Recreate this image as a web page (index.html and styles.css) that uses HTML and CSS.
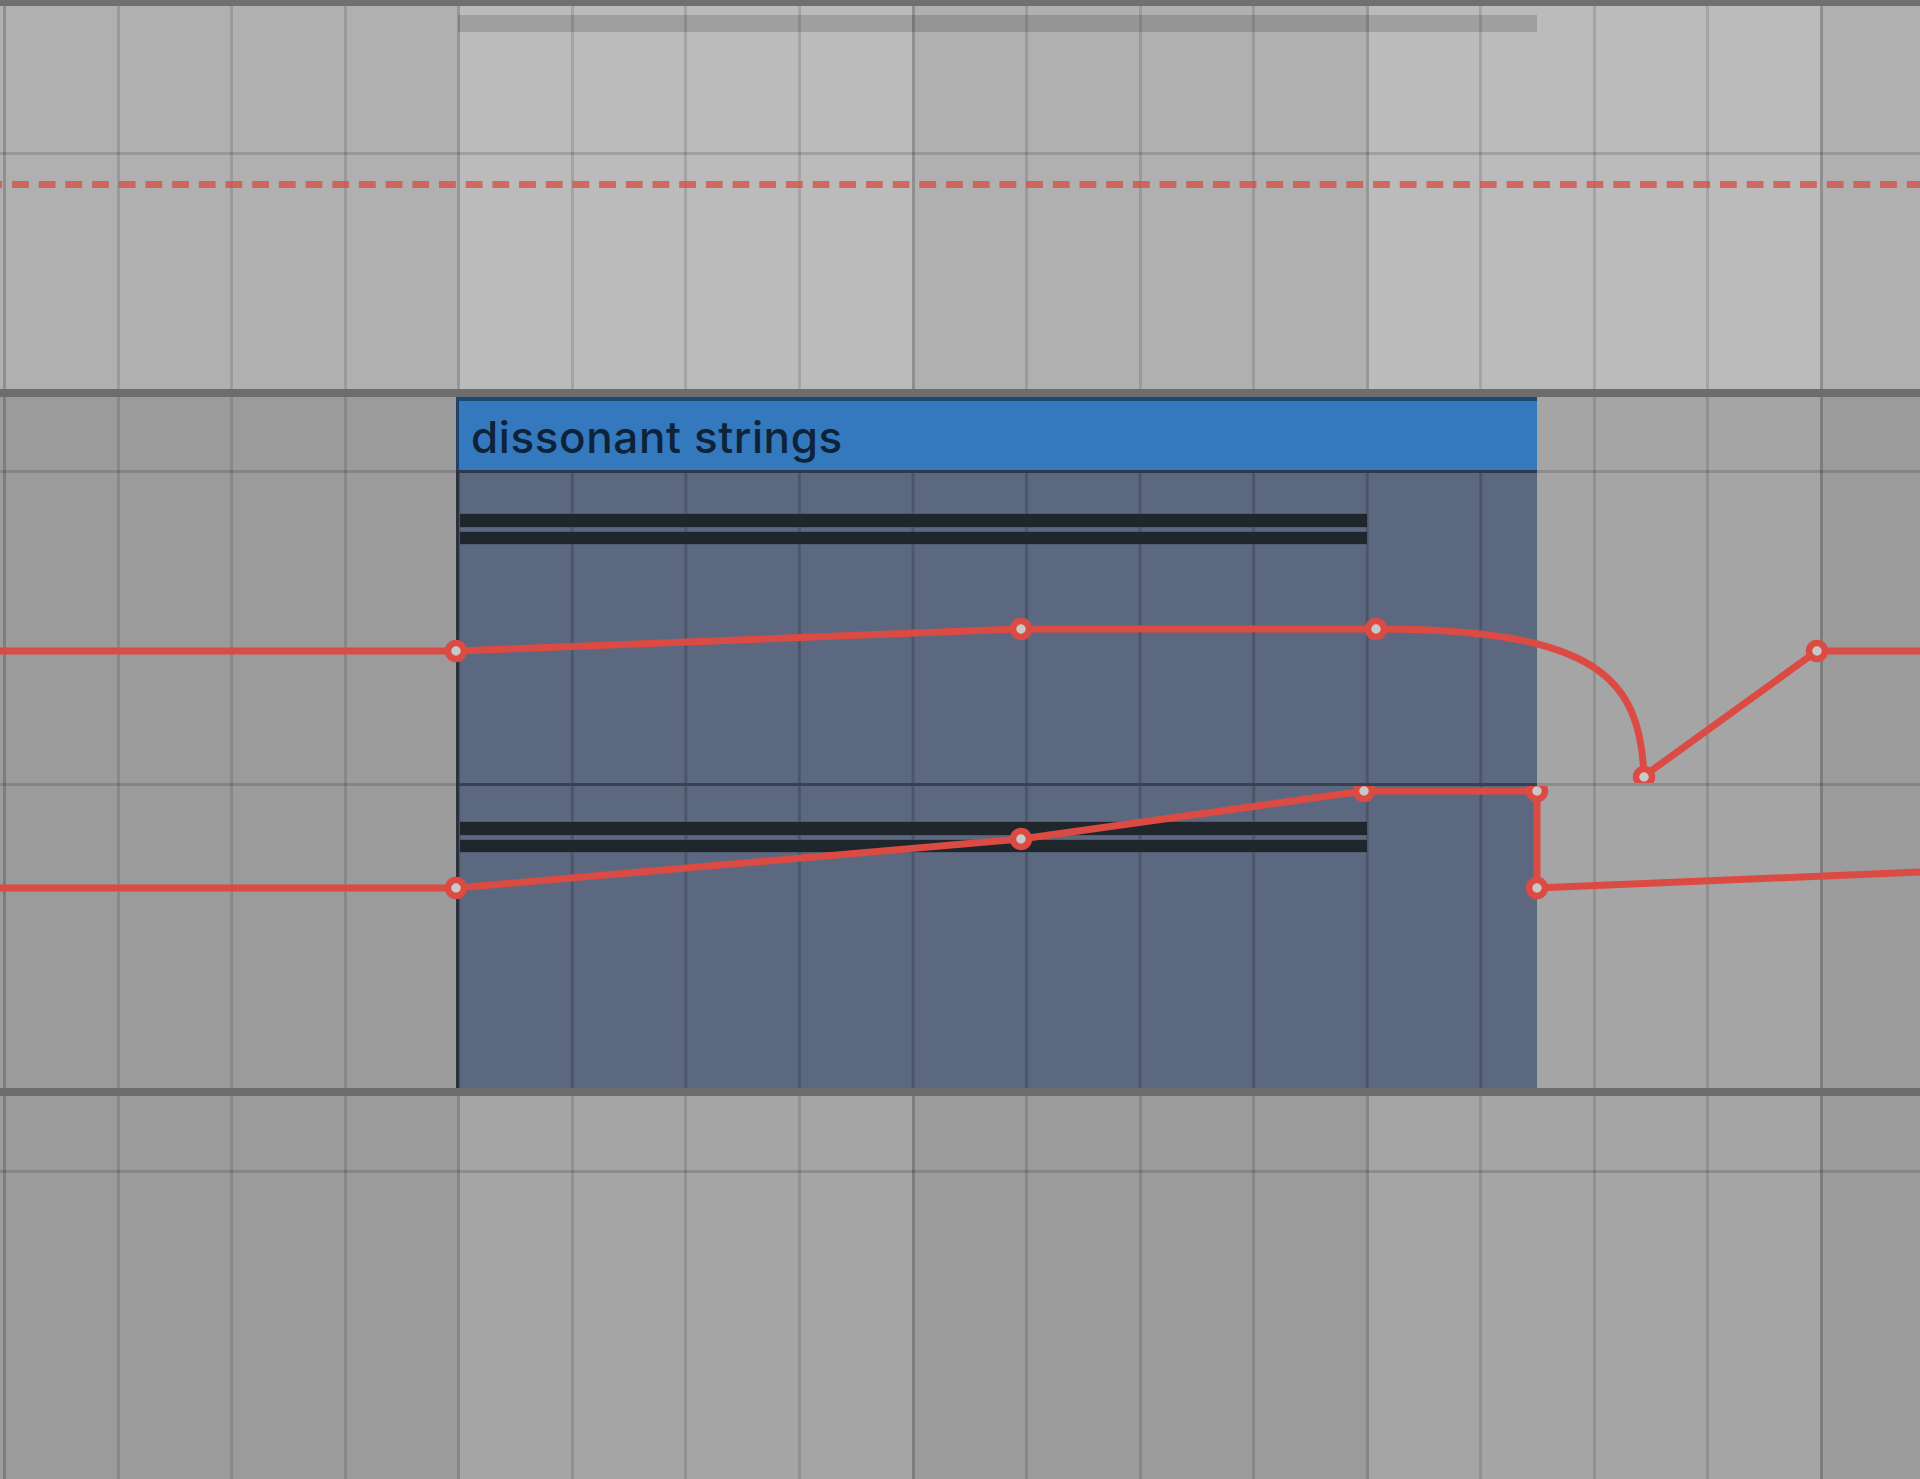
FILE: index.html
```html
<!DOCTYPE html>
<html lang="en">
<head>
<meta charset="utf-8">
<title>Arrangement – dissonant strings</title>
<link rel="stylesheet" href="styles.css">
</head>
<body>
<main class="arrangement">
  <div class="top-edge"></div>

  <section class="track track-light t1">
    <div class="layer bars">
      <div class="bar dark"><div class="beat"></div><div class="beat"></div><div class="beat"></div><div class="beat"></div></div>
      <div class="bar light"><div class="beat"></div><div class="beat"></div><div class="beat"></div><div class="beat"></div></div>
      <div class="bar dark"><div class="beat"></div><div class="beat"></div><div class="beat"></div><div class="beat"></div></div>
      <div class="bar light"><div class="beat"></div><div class="beat"></div><div class="beat"></div><div class="beat"></div></div>
      <div class="bar dark"><div class="beat"></div><div class="beat"></div><div class="beat"></div><div class="beat"></div></div>
    </div>
    <div class="layer lanes">
      <div class="lane lane-head-tall"></div>
      <div class="lane lane-fill"><div class="dashed"></div></div>
    </div>
    <div class="layer loop-row">
      <div class="loop-spacer"></div>
      <div class="loop-bar"></div>
    </div>
  </section>

  <div class="track-sep"></div>

  <section class="track track-mid t2">
    <div class="layer bars">
      <div class="bar dark"><div class="beat"></div><div class="beat"></div><div class="beat"></div><div class="beat"></div></div>
      <div class="bar light"><div class="beat"></div><div class="beat"></div><div class="beat"></div><div class="beat"></div></div>
      <div class="bar dark"><div class="beat"></div><div class="beat"></div><div class="beat"></div><div class="beat"></div></div>
      <div class="bar light"><div class="beat"></div><div class="beat"></div><div class="beat"></div><div class="beat"></div></div>
      <div class="bar dark"><div class="beat"></div><div class="beat"></div><div class="beat"></div><div class="beat"></div></div>
    </div>
    <div class="layer lanes">
      <div class="lane lane-head"></div>
      <div class="lane lane-auto-a"></div>
      <div class="lane lane-fill"></div>
    </div>
    <div class="layer clip-row">
      <div class="clip-spacer"></div>
      <div class="clip">
        <div class="clip-head">dissonant strings</div>
        <div class="clip-body">
          <div class="clip-lane clip-lane-a">
            <div class="note"></div>
            <div class="note"></div>
          </div>
          <div class="clip-lane clip-lane-b">
            <div class="note"></div>
            <div class="note"></div>
          </div>
        </div>
      </div>
    </div>
    <div class="layer curves">
      <div class="curve-head"></div>
      <div class="curve-lane curve-lane-a">
        <svg width="1920" height="310" viewBox="0 0 1920 310">
          <path class="env" d="M0 178 L456 178 L1021 156 L1376 156 C1600 156 1640 207 1644 303 L1817 178 L1920 178"/>
          <circle class="node" cx="456" cy="178" r="8"/>
          <circle class="node" cx="1021" cy="156" r="8"/>
          <circle class="node" cx="1376" cy="156" r="8"/>
          <circle class="node" cx="1644" cy="304" r="8"/>
          <circle class="node" cx="1817" cy="178" r="8"/>
        </svg>
      </div>
      <div class="curve-lane curve-lane-b">
        <svg width="1920" height="302" viewBox="0 0 1920 302">
          <path class="env" d="M0 102 L456 102 L1021 53 L1364 5 L1537 5 L1537 102 L1920 86"/>
          <circle class="node" cx="456" cy="102" r="8"/>
          <circle class="node" cx="1021" cy="53" r="8"/>
          <circle class="node" cx="1364" cy="5" r="8"/>
          <circle class="node" cx="1537" cy="5" r="8"/>
          <circle class="node" cx="1537" cy="102" r="8"/>
        </svg>
      </div>
    </div>
  </section>

  <div class="track-sep"></div>

  <section class="track track-mid t3">
    <div class="layer bars">
      <div class="bar dark"><div class="beat"></div><div class="beat"></div><div class="beat"></div><div class="beat"></div></div>
      <div class="bar light"><div class="beat"></div><div class="beat"></div><div class="beat"></div><div class="beat"></div></div>
      <div class="bar dark"><div class="beat"></div><div class="beat"></div><div class="beat"></div><div class="beat"></div></div>
      <div class="bar light"><div class="beat"></div><div class="beat"></div><div class="beat"></div><div class="beat"></div></div>
      <div class="bar dark"><div class="beat"></div><div class="beat"></div><div class="beat"></div><div class="beat"></div></div>
    </div>
    <div class="layer lanes">
      <div class="lane lane-head-b"></div>
      <div class="lane lane-fill"></div>
    </div>
  </section>
</main>
</body>
</html>
```

FILE: styles.css
```css
* { box-sizing: border-box; }

html, body {
  margin: 0;
  padding: 0;
  width: 1920px;
  height: 1479px;
  overflow: hidden;
  background: #9b9b9b;
  font-family: Inter, "Noto Sans", "Liberation Sans", sans-serif;
}

.arrangement {
  display: flex;
  flex-direction: column;
  width: 1920px;
  height: 1479px;
}

.top-edge {
  height: 6px;
  flex: 0 0 6px;
  background: #707070;
}

.track-sep {
  flex: 0 0 8px;
  background: #6d6d6d;
}

.track {
  display: grid;
  overflow: hidden;
  position: relative;
}

.t1 { flex: 0 0 383px; }
.t2 { flex: 0 0 691px; }
.t3 { flex: 1 1 auto; }

.layer {
  grid-area: 1 / 1;
  min-width: 0;
  min-height: 0;
}

/* ---------- bar / beat grid ---------- */
.bars {
  display: flex;
  padding-left: 3px;
}

.track-light .bars { background: #b0b0b0; }
.track-mid .bars { background: #9b9b9b; }

.bar {
  flex: 0 0 454.25px;
  display: flex;
}

.track-light .bar.dark { background: #b0b0b0; }
.track-light .bar.light { background: #bbbbbb; }
.track-mid .bar.dark { background: #9b9b9b; }
.track-mid .bar.light { background: #a5a5a5; }

.beat {
  flex: 1 1 0;
  border-left: 3px solid rgba(0, 0, 0, 0.12);
}

.beat:first-child {
  border-left-color: rgba(0, 0, 0, 0.19);
}

/* ---------- horizontal lanes ---------- */
.lanes {
  display: flex;
  flex-direction: column;
}

.lane { flex: 0 0 auto; }

.lane-head-tall {
  height: 149px;
  border-bottom: 3px solid rgba(0, 0, 0, 0.14);
}

.lane-head {
  height: 76px;
  border-bottom: 3px solid rgba(0, 0, 0, 0.14);
}

.lane-head-b {
  height: 77px;
  border-bottom: 3px solid rgba(0, 0, 0, 0.14);
}

.lane-auto-a {
  height: 313px;
  border-bottom: 3px solid rgba(0, 0, 0, 0.14);
}

.lane-fill { flex: 1 1 auto; }

.dashed {
  margin-top: 26px;
  height: 7px;
  background-image: linear-gradient(90deg, rgba(216, 72, 66, 0.72) 0 16.5px, transparent 16.5px);
  background-size: 26.69px 7px;
  background-position: 12px 0;
  background-repeat: repeat-x;
}

/* ---------- loop brace ---------- */
.loop-row {
  display: flex;
  align-items: flex-start;
  padding-top: 9px;
}

.loop-spacer { flex: 0 0 458px; }

.loop-bar {
  flex: 0 0 1079px;
  height: 17px;
  background: rgba(0, 0, 0, 0.15);
}

/* ---------- clip ---------- */
.clip-row {
  display: flex;
}

.clip-spacer { flex: 0 0 456px; }

.clip {
  flex: 0 0 1081px;
  display: flex;
  flex-direction: column;
}

.clip-head {
  flex: 0 0 73px;
  background: #3479be;
  border-top: 4px solid #1d4a75;
  border-left: 3px solid #1f4266;
  padding-left: 12px;
  color: #0e2338;
  font-size: 44px;
  font-weight: 500;
  line-height: 72px;
  letter-spacing: 0.6px;
  white-space: nowrap;
  overflow: hidden;
}

.clip-body {
  flex: 1 1 auto;
  display: flex;
  flex-direction: column;
  background-color: #5c6880;
  background-image: linear-gradient(90deg, rgba(0, 0, 0, 0.17) 0 3px, transparent 3px);
  background-size: 113.5625px 100%;
  background-position: 111.8px 0;
  background-repeat: repeat-x;
  border-top: 3px solid #2e3a4b;
  border-left: 3px solid #2b323d;
}

.clip-lane {
  display: flex;
  flex-direction: column;
  gap: 5px;
}

.clip-lane-a {
  flex: 0 0 313px;
  padding-top: 41px;
  border-bottom: 3px solid #374152;
}

.clip-lane-b {
  flex: 1 1 auto;
  padding-top: 36px;
}

.note {
  width: 907px;
  height: 13px;
  margin-left: 1px;
  background: #1f262c;
  box-shadow: 0 0 0 1px rgba(70, 82, 100, 0.5);
}

.note + .note { height: 12px; }

/* ---------- automation curves ---------- */
.curves {
  display: flex;
  flex-direction: column;
}

.curve-head { flex: 0 0 76px; }

.curve-lane { flex: 0 0 auto; overflow: hidden; }
.curve-lane-a { height: 310px; margin-bottom: 3px; }
.curve-lane-b { height: 302px; }

.curve-lane svg {
  display: block;
  overflow: hidden;
}

.env {
  fill: none;
  stroke: #db4b43;
  stroke-width: 7;
  stroke-linejoin: round;
  stroke-linecap: round;
}

.node {
  fill: #c8c8c8;
  stroke: #db4b43;
  stroke-width: 6.5;
}
```
